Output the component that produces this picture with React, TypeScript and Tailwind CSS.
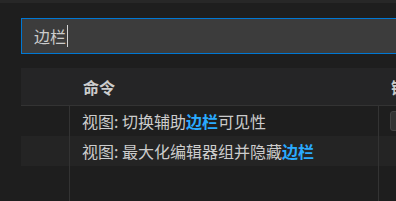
import React from 'react';

const font = { fontFamily: '"Noto Sans CJK SC", "Noto Sans", sans-serif' };

type Part = { text: string; hit?: boolean };

const rows: { parts: Part[]; key?: boolean }[] = [
  {
    parts: [{ text: '视图: 切换辅助' }, { text: '边栏', hit: true }, { text: '可见性' }],
    key: true,
  },
  {
    parts: [{ text: '视图: 最大化编辑器组并隐藏' }, { text: '边栏', hit: true }],
  },
];

export default function App() {
  return (
    <div
      className="flex h-[201px] w-[396px] flex-col overflow-hidden bg-[#1e1e1e] text-[#cccccc]"
      style={font}
    >
      <div className="h-[3px] shrink-0 bg-[#272727]" />

      {/* Search box */}
      <div className="mt-[15px] shrink-0 pl-[21px]">
        <div className="flex h-[36px] w-[420px] items-center border border-[#0078d4] bg-[#3c3c3c] pl-[12px]">
          <span className="text-[16px] leading-none text-[#cccccc]">边栏</span>
          <span className="ml-[1px] h-[22px] w-[1px] bg-[#d4d4d4]" />
        </div>
      </div>

      {/* Table */}
      <div className="ml-[21px] mt-[14px] flex min-h-0 flex-1 flex-col">
        <div className="flex h-[38px] shrink-0 items-center border-b border-[#333333] bg-[#252526] text-[16px] font-bold">
          <div className="w-[49px] shrink-0" />
          <div className="w-[309px] shrink-0 pl-[13px]">命令</div>
          <div className="shrink-0 whitespace-nowrap pl-[12px]">键绑定</div>
        </div>

        {rows.map((row, i) => (
          <div
            key={i}
            className={`flex h-[30px] shrink-0 text-[16px] ${i % 2 === 1 ? 'bg-[#242424]' : ''}`}
          >
            <div className="w-[49px] shrink-0 border-r border-[#333333]" />
            <div className="flex w-[309px] shrink-0 items-center whitespace-nowrap border-r border-[#333333] pl-[12px]">
              {row.parts.map((p, j) =>
                p.hit ? (
                  <span key={j} className="font-bold text-[#2aaaff]">
                    {p.text}
                  </span>
                ) : (
                  <span key={j}>{p.text}</span>
                )
              )}
            </div>
            <div className="flex items-center pl-[11px]">
              {row.key && (
                <span className="h-[20px] w-[30px] rounded-[3px] border border-[#444444] bg-[#333333]" />
              )}
            </div>
          </div>
        ))}

        <div className="flex flex-1">
          <div className="w-[49px] shrink-0 border-r border-[#333333]" />
          <div className="w-[309px] shrink-0 border-r border-[#333333]" />
        </div>
      </div>
    </div>
  );
}
